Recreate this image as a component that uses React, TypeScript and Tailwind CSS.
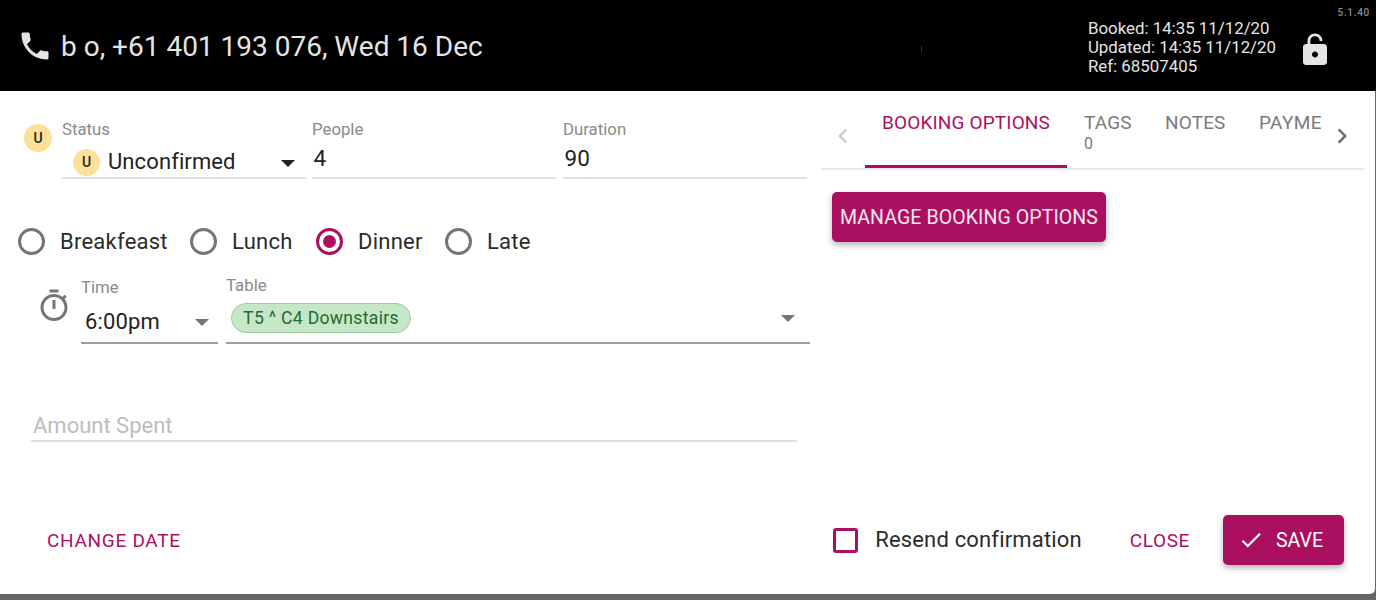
import React from "react";

const PINK = "text-[#ab1060]";

const Icon: React.FC<{ d: string; className: string; evenOdd?: boolean }> = ({ d, className, evenOdd }) => (
    <svg viewBox="0 0 24 24" className={className} fill="currentColor" fillRule={evenOdd ? "evenodd" : "nonzero"}>
        <path d={d} />
    </svg>
);

const PHONE =
    "M6.62 10.79c1.44 2.83 3.76 5.14 6.59 6.59l2.2-2.2c.27-.27.67-.36 1.02-.24 1.12.37 2.33.57 3.57.57.55 0 1 .45 1 1V20c0 .55-.45 1-1 1-9.39 0-17-7.61-17-17 0-.55.45-1 1-1h3.5c.55 0 1 .45 1 1 0 1.25.2 2.45.57 3.57.11.35.03.74-.25 1.02l-2.2 2.2z";
const LOCK_OPEN =
    "M6 8h12c1.1 0 2 .9 2 2v10c0 1.1-.9 2-2 2H6c-1.1 0-2-.9-2-2V10c0-1.1.9-2 2-2zM12 13c-1.1 0-2 .9-2 2s.9 2 2 2 2-.9 2-2-.9-2-2-2zM7 8V6c0-2.76 2.24-5 5-5s5 2.24 5 5h-1.9c0-1.71-1.39-3.1-3.1-3.1S8.9 4.29 8.9 6v2z";
const TIMER =
    "M15 1H9v2h6V1zm-4 13h2V8h-2v6zm8.03-6.61l1.42-1.42c-.43-.51-.9-.99-1.41-1.41l-1.42 1.42C16.07 4.74 14.12 4 12 4c-4.97 0-9 4.03-9 9s4.02 9 9 9 9-4.03 9-9c0-2.12-.74-4.07-1.97-5.61zM12 20c-3.87 0-7-3.13-7-7s3.13-7 7-7 7 3.13 7 7-3.13 7-7 7z";
const CHEVRON_LEFT = "M15.41 7.41L14 6l-6 6 6 6 1.41-1.41L10.83 12z";
const CHEVRON_RIGHT = "M10 6L8.59 7.41 13.17 12l-4.58 4.59L10 18l6-6z";
const CHECK = "M9 16.17L4.83 12l-1.42 1.41L9 19 21 7l-1.41-1.41z";

const Badge: React.FC<{ className: string }> = ({ className }) => (
    <div className={`flex shrink-0 items-center justify-center rounded-full bg-[#ffe09a] text-[14px] font-medium text-[#222] ${className}`}>U</div>
);

const Arrow: React.FC<{ className: string }> = ({ className }) => (
    <div className={`h-0 w-0 border-x-[7.5px] border-t-[7.5px] border-x-transparent ${className}`} />
);

const Radio: React.FC<{ label: string; checked?: boolean; className: string }> = ({ label, checked, className }) => (
    <div className={`flex items-center ${className}`}>
        <div className={`flex h-[27px] w-[27px] shrink-0 items-center justify-center rounded-full border-[3px] ${checked ? "border-[#ab1060]" : "border-[#757575]"}`}>
            {checked && <div className="h-[13px] w-[13px] rounded-full bg-[#ab1060]" />}
        </div>
        <span className="ml-[15px] pt-[2px] text-[22px] leading-[26px] tracking-[0.25px] text-[#2b2b2b]">{label}</span>
    </div>
);

const Field: React.FC<{ label: string; value: string; className: string }> = ({ label, value, className }) => (
    <div className={`h-[59px] border-b-[2px] border-[#e0e0e0] ${className}`}>
        <div className="mt-[-1px] h-[21px] text-[16.8px] leading-[21px] text-[#8a8a8a]">{label}</div>
        <div className="mt-[4px] pl-[1.5px] text-[22.5px] leading-[28px] text-[#222]">{value}</div>
    </div>
);

const Tab: React.FC<{ label: string; sub?: string; className: string }> = ({ label, sub, className }) => (
    <div className={`h-[77px] shrink-0 pt-[20px] text-left text-[19px] leading-[24px] tracking-[0.15px] text-[#7a7a7a] ${className}`}>
        {label}
        {sub && <div className="text-[16px] leading-[18px]">{sub}</div>}
    </div>
);

const App: React.FC = () => {
    return (
        <div className="relative flex h-[600px] w-[1376px] flex-col overflow-hidden bg-[#666] font-['Roboto',sans-serif]">
            {/* Header */}
            <header className="relative flex h-[91px] shrink-0 items-center bg-black pl-[17px] pr-[43px] text-[#e4e4e4]">
                <Icon d={PHONE} className="h-[36px] w-[36px] shrink-0" />
                <h1 className="ml-[8px] mt-[2px] text-[28px] font-normal leading-[36px]">b o, +61 401 193 076, Wed 16 Dec</h1>
                <div className="ml-auto mt-[3px] text-[16.85px] leading-[19px]">
                    <div>Booked: 14:35 11/12/20</div>
                    <div>Updated: 14:35 11/12/20</div>
                    <div>Ref: 68507405</div>
                </div>
                <Icon d={LOCK_OPEN} evenOdd className="ml-[21px] mt-[9px] h-[36px] w-[36px] shrink-0" />
                <span className="absolute right-[6px] top-[7px] text-[10px] font-medium leading-[12px] tracking-[0.7px] text-[#8c8c8c]">5.1.40</span>
                <span className="absolute left-[921px] top-[46px] h-[6px] w-[1px] bg-[#333]" />
            </header>

            {/* Dialog body */}
            <main className="flex h-[503px] w-[1375px] flex-col rounded-br-[5px] bg-white">
                <div className="flex flex-1">
                    {/* Left column */}
                    <section className="w-[821px] shrink-0">
                        <div className="flex pl-[24px] pt-[29px]">
                            <Badge className="mt-[4px] h-[28px] w-[28px]" />
                            <div className="ml-[10px] flex h-[59px] w-[244px] flex-col border-b-[2px] border-[#e0e0e0]">
                                <div className="mt-[-1px] h-[21px] text-[16.8px] leading-[21px] text-[#8a8a8a]">Status</div>
                                <div className="mt-[8px] flex items-center pl-[11px]">
                                    <Badge className="h-[27px] w-[27px]" />
                                    <span className="ml-[8px] text-[22px] leading-[28px] tracking-[0.1px] text-[#222]">Unconfirmed</span>
                                    <Arrow className="ml-auto mr-[11px] mt-[2px] border-t-[#222]" />
                                </div>
                            </div>
                            <Field label="People" value="4" className="ml-[6px] w-[244px]" />
                            <Field label="Duration" value="90" className="ml-[7px] w-[244px]" />
                        </div>

                        <div className="mt-[48px] flex pl-[18px]">
                            <Radio label="Breakfeast" className="w-[172px]" />
                            <Radio label="Lunch" className="w-[126px]" />
                            <Radio label="Dinner" checked className="w-[129px]" />
                            <Radio label="Late" className="w-[100px]" />
                        </div>

                        <div className="mt-[10px] flex">
                            <Icon d={TIMER} className="ml-[36px] mt-[23px] h-[36px] w-[36px] shrink-0 text-[#757575]" />
                            <div className="ml-[9px] h-[79px] w-[137px] border-b-[2px] border-[#9e9e9e] pt-[12px]">
                                <div className="h-[20px] text-[16.8px] leading-[20px] text-[#8a8a8a]">Time</div>
                                <div className="mt-[11px] flex items-center pl-[4px]">
                                    <span className="text-[22px] leading-[28px] tracking-[0.15px] text-[#222]">6:00pm</span>
                                    <Arrow className="ml-auto mr-[9px] mt-[1px] border-t-[#757575]" />
                                </div>
                            </div>
                            <div className="ml-[8px] h-[79px] w-[584px] border-b-[2px] border-[#9e9e9e] pt-[10px]">
                                <div className="h-[20px] text-[16.8px] leading-[20px] text-[#8a8a8a]">Table</div>
                                <div className="mt-[8px] flex items-center pl-[5px]">
                                    <div className="flex h-[30px] w-[180px] items-center justify-center rounded-full border border-[#9ccc9c] bg-[#c5e7c8] text-[17.6px] tracking-[0.3px] text-[#1f6b33]">
                                        T5 ^ C4 Downstairs
                                    </div>
                                    <Arrow className="ml-auto mr-[15px] border-t-[#757575]" />
                                </div>
                            </div>
                        </div>

                        <div className="ml-[31px] mt-[68px] h-[30px] w-[766px] border-b-[2px] border-[#e0e0e0] pl-[2px] text-[22px] leading-[28px] text-[#bdbdbd]">
                            Amount Spent
                        </div>
                    </section>

                    {/* Right column */}
                    <section className="min-w-0 flex-1 pr-[11px]">
                        <div className="flex h-[79px] border-b-[2px] border-[#e8e8e8]">
                            <div className="flex w-[44px] shrink-0 items-center justify-end pt-[13px]">
                                <Icon d={CHEVRON_LEFT} className="mr-[7px] h-[30px] w-[30px] text-[#cfcfcf]" />
                            </div>
                            <div className="flex w-[456px] shrink-0">
                                <Tab label="BOOKING OPTIONS" className="w-[202px] border-b-[3px] border-[#ab1060] pl-[17px] !text-[#ab1060]" />
                                <Tab label="TAGS" sub="0" className="w-[81px] pl-[17px]" />
                                <Tab label="NOTES" className="w-[94px] pl-[17px]" />
                                <Tab label="PAYME" className="w-[79px] pl-[17px] !tracking-[0.4px]" />
                            </div>
                            <div className="flex flex-1 items-center pt-[13px]">
                                <Icon d={CHEVRON_RIGHT} className="ml-[6px] h-[30px] w-[30px] text-[#6e6e6e]" />
                            </div>
                        </div>
                        <button className="ml-[11px] mt-[22px] h-[50px] w-[274px] rounded-[5px] bg-[#ab1060] pt-[1px] text-[19.5px] tracking-[0.1px] text-[#f7e6ee] shadow-[0_3px_6px_rgba(0,0,0,0.3)]">
                            MANAGE BOOKING OPTIONS
                        </button>
                    </section>
                </div>

                {/* Footer */}
                <footer className="mb-[29px] flex h-[50px] items-center pl-[47px] pr-[31px]">
                    <span className={`mt-[2px] text-[19px] tracking-[0.7px] ${PINK}`}>CHANGE DATE</span>
                    <div className="ml-auto h-[25px] w-[25px] rounded-[3px] border-[3px] border-[#ab1060]" />
                    <span className="ml-[17px] text-[22px] leading-[28px] tracking-[0.17px] text-[#2b2b2b]">Resend confirmation</span>
                    <span className={`ml-[48px] mt-[2px] text-[19px] tracking-[0.6px] ${PINK}`}>CLOSE</span>
                    <button className="ml-[33px] flex h-[50px] w-[121px] items-center rounded-[5px] bg-[#ab1060] pl-[15px] text-[19.5px] text-white shadow-[0_3px_6px_rgba(0,0,0,0.3)]">
                        <Icon d={CHECK} className="h-[26px] w-[26px]" />
                        <span className="ml-[12px] mt-[2px]">SAVE</span>
                    </button>
                </footer>
            </main>
        </div>
    );
};

export default App;
